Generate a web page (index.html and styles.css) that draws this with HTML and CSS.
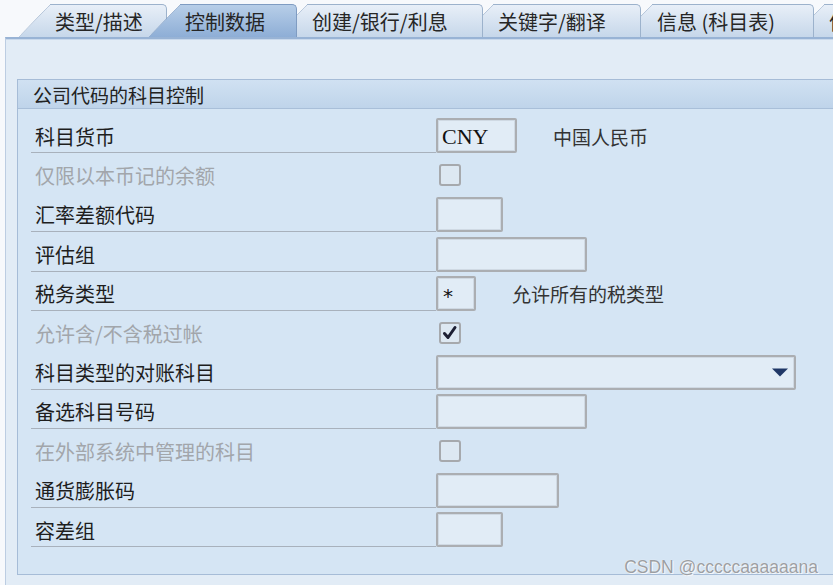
FILE: index.html
```html
<!DOCTYPE html>
<html lang="zh-CN">
<head>
<meta charset="utf-8">
<title>控制数据</title>
<link rel="stylesheet" href="styles.css">
</head>
<body>
<div class="tabs">
  <div class="tab t1"><span class="tab-text">类型/描述</span></div>
  <div class="tab t2 active"><span class="tab-text">控制数据</span></div>
  <div class="tab t3"><span class="tab-text">创建/银行/利息</span></div>
  <div class="tab t4"><span class="tab-text">关键字/翻译</span></div>
  <div class="tab t5"><span class="tab-text">信息 (科目表)</span></div>
  <div class="tab t6"><span class="tab-text">信息 (公司代码)</span></div>
</div>
<div class="panel">
  <div class="group">
    <div class="group-head">公司代码的科目控制</div>
    <div class="group-body">
      <div class="row">
        <div class="label">科目货币</div>
        <div class="field w81"><span class="value serif">CNY</span></div>
        <div class="desc">中国人民币</div>
      </div>
      <div class="row">
        <div class="label disabled">仅限以本币记的余额</div>
        <div class="check"></div>
      </div>
      <div class="row">
        <div class="label">汇率差额代码</div>
        <div class="field w67"></div>
      </div>
      <div class="row">
        <div class="label">评估组</div>
        <div class="field w151"></div>
      </div>
      <div class="row">
        <div class="label">税务类型</div>
        <div class="field w40"><span class="value star">*</span></div>
        <div class="desc">允许所有的税类型</div>
      </div>
      <div class="row">
        <div class="label disabled">允许含/不含税过帐</div>
        <div class="check">
          <svg class="tick" width="22" height="22" viewBox="0 0 22 22"><path d="M5.5 11.5 L9 15.5 L16 5.5" fill="none" stroke="#1d1f33" stroke-width="3" stroke-linecap="round" stroke-linejoin="round"/></svg>
        </div>
      </div>
      <div class="row">
        <div class="label">科目类型的对账科目</div>
        <div class="field w360 dropdown">
          <svg width="16" height="9" viewBox="0 0 16 9"><path d="M0 0.5 H16 L8 8.5 Z" fill="#1f3766"/></svg>
        </div>
      </div>
      <div class="row">
        <div class="label">备选科目号码</div>
        <div class="field w151"></div>
      </div>
      <div class="row">
        <div class="label disabled">在外部系统中管理的科目</div>
        <div class="check"></div>
      </div>
      <div class="row">
        <div class="label">通货膨胀码</div>
        <div class="field w123"></div>
      </div>
      <div class="row">
        <div class="label">容差组</div>
        <div class="field w67"></div>
      </div>
    </div>
  </div>
  <div class="watermark">CSDN @cccccaaaaaana</div>
</div>
</body>
</html>
```
FILE: styles.css
```css
html, body {
  margin: 0;
  padding: 0;
}
body {
  width: 833px;
  height: 585px;
  overflow: hidden;
  background: #f7f9fc;
  font-family: "Noto Sans CJK SC", "Noto Sans", sans-serif;
  color: #1e1e1e;
}

/* ---------- tabs ---------- */
.tabs {
  display: flex;
  flex-wrap: nowrap;
  height: 37px;
  padding-top: 4px;
  box-sizing: border-box;
  align-items: stretch;
}
.tab {
  position: relative;
  flex: none;
  height: 33px;
  box-sizing: border-box;
  padding-left: 5px;
  padding-top: 1px;
  font-size: 20px;
  line-height: 33px;
  color: #262626;
  white-space: nowrap;
}
.tab::before {
  content: "";
  position: absolute;
  top: 0;
  bottom: 0;
  left: 0;
  width: 36px;
  box-sizing: border-box;
  border-left: 1px solid #9cb2cc;
  border-top: 1px solid #9cb2cc;
  border-top-left-radius: 3px;
  background: linear-gradient(#e8eff8, #c6d7ea);
  transform-origin: top left;
  transform: skewX(-44deg);
}
.tab::after {
  content: "";
  position: absolute;
  top: 0;
  bottom: 0;
  left: 0;
  right: 0;
  box-sizing: border-box;
  border-top: 1px solid #9cb2cc;
  border-right: 1px solid #9cb2cc;
  border-top-right-radius: 5px;
  background: linear-gradient(#e8eff8, #c6d7ea);
}
.tab-text {
  position: relative;
  z-index: 1;
}
.tab.active::before,
.tab.active::after {
  background: linear-gradient(#b7cee8, #8eaed6);
  border-color: #7f9cc2;
}
.t1 { margin-left: 50px; width: 117px; z-index: 6; }
.t2 { margin-left: 13px; width: 117px; z-index: 10; }
.t3 { margin-left: 10px; width: 176px; z-index: 4; }
.t4 { margin-left: 10px; width: 148px; z-index: 3; }
.t5 { margin-left: 11px; width: 162px; z-index: 2; }
.t6 { margin-left: 10px; width: 180px; z-index: 1; }

/* ---------- panel ---------- */
.panel {
  position: relative;
  margin-left: 5px;
  height: 548px;
  box-sizing: border-box;
  border-top: 2px solid #98b3d5;
  border-left: 1px solid #bccde2;
  background: #e2ecf6;
  box-shadow: inset 0 1px 0 #c9d9ec;
  padding: 40px 0 0 11px;
}
.group {
  margin-right: -20px;
  border: 1px solid #a6bcd7;
  background: #d5e5f4;
}
.group-head {
  height: 29px;
  box-sizing: border-box;
  padding-left: 15px;
  padding-top: 1px;
  border-bottom: 1px solid #a9bfd9;
  background: linear-gradient(#d0e1f2, #bfd4ea);
  font-size: 19px;
  line-height: 28px;
  color: #222;
}
.group-body {
  padding: 5px 0 27px 13px;
}
.row {
  display: flex;
  align-items: center;
  height: 39.4px;
}
.label {
  flex: none;
  width: 405px;
  height: 100%;
  box-sizing: border-box;
  padding: 6px 0 0 4px;
  display: flex;
  align-items: center;
  font-size: 20px;
  color: #1e1e1e;
  border-bottom: 1px solid #a8b1bc;
}
.label.disabled {
  color: #a2a6ab;
  border-bottom-color: transparent;
}
.field {
  flex: none;
  align-self: flex-end;
  height: 35px;
  box-sizing: border-box;
  border: 2px solid #abaeb2;
  border-radius: 2px;
  background: #e1ecf6;
  box-shadow: inset 0 0 0 1px #cfd9e3;
  display: flex;
  align-items: center;
}
.w40 { width: 40px; }
.w67 { width: 67px; }
.w81 { width: 81px; }
.w123 { width: 123px; }
.w151 { width: 151px; }
.w360 { width: 360px; }
.value {
  padding-left: 4px;
  color: #111;
}
.serif {
  font-family: "Liberation Serif", serif;
  font-size: 22px;
  padding-top: 3px;
}
.star {
  font-family: "DejaVu Sans", sans-serif;
  font-size: 20px;
  padding-left: 5px;
  padding-top: 5px;
}
.dropdown {
  justify-content: flex-end;
  padding-right: 6px;
}
.desc {
  margin-left: 36px;
  padding-top: 5px;
  font-size: 19px;
  color: #333;
}
.check {
  flex: none;
  width: 22px;
  height: 22px;
  box-sizing: border-box;
  margin-left: 3px;
  margin-top: 4px;
  border: 2px solid #a6a9ad;
  border-radius: 3px;
  background: #dde8f2;
  position: relative;
}
.tick {
  position: absolute;
  left: -2px;
  top: -2px;
}
.watermark {
  position: absolute;
  right: 15px;
  bottom: 7px;
  font-family: "Liberation Sans", Arial, sans-serif;
  font-size: 17.5px;
  color: #9c9fa3;
  text-shadow: 0 0 1px #ffffff, 1px 1px 0 #f4f7fa;
}
```
